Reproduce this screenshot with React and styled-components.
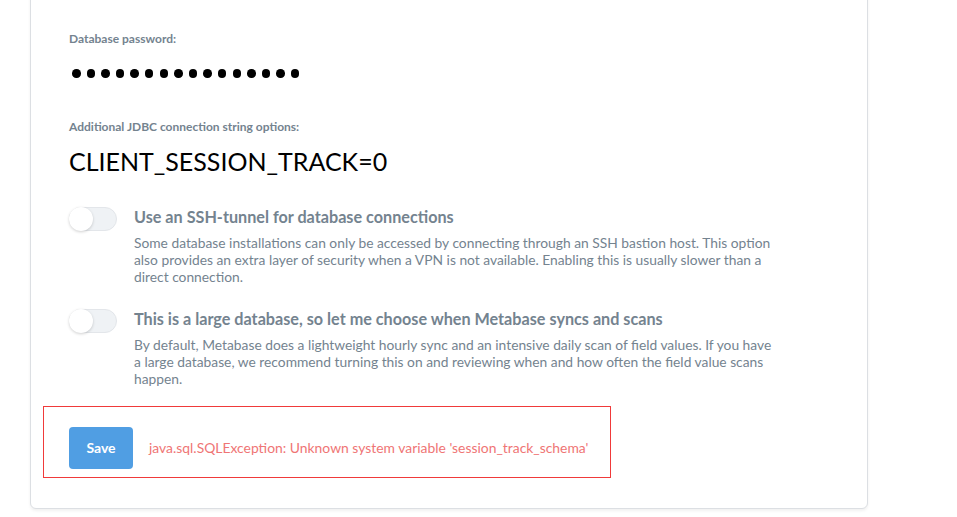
import React from 'react'
import styled, {createGlobalStyle} from 'styled-components'

const GlobalStyle = createGlobalStyle`
body {
  margin: 0;
  background: #ffffff;
  font-family: Lato, "Open Sans", sans-serif;
  overflow: hidden;
}
`

const Page = styled('div')`
width: 957px;
height: 517px;
overflow: hidden;
`

const Card = styled('div')`
margin: -10px 0 0 30px;
width: 798px;
padding: 40px 0 30px 38px;
background: #fff;
border: 1px solid #dcdfe3;
border-radius: 6px;
box-shadow: 0 2px 3px rgba(0, 0, 0, 0.06);
`

const Label = styled('div')`
font-size: 12px;
line-height: 16px;
font-weight: 700;
color: #74838f;
`

const DotRow = styled('div')`
display: flex;
gap: 6.1px;
margin: 22px 0 41px 3px;
`

const Dot = styled('span')`
width: 8.5px;
height: 8.5px;
border-radius: 50%;
background: #000;
`

const Value = styled('div')`
margin-top: 11px;
font-size: 25px;
line-height: 30px;
color: #000;
`

const ToggleRow = styled('div')`
display: flex;
gap: 17px;
margin-top: ${p => p.top}px;
`

const Toggle = styled('div')`
flex: none;
position: relative;
width: 46px;
height: 22px;
border: 1px solid #e3e6ea;
border-radius: 12px;
background: #eff2f5;
`

const Knob = styled('span')`
position: absolute;
left: -1px;
top: -1px;
width: 24px;
height: 24px;
border-radius: 50%;
background: #fff;
box-shadow: 0 1px 3px rgba(0, 0, 0, 0.18);
`

const OptionText = styled('div')`
max-width: 641px;
`

const OptionTitle = styled('div')`
font-size: 16.2px;
line-height: 20px;
font-weight: 700;
color: #74838f;
`

const OptionDesc = styled('div')`
margin-top: 7.5px;
font-size: 13.8px;
line-height: 17px;
color: #74838f;
`

const Highlight = styled('div')`
display: flex;
align-items: center;
gap: 16px;
margin: 18.5px 0 0 -26px;
width: 541px;
padding: 20px 0 8px 25px;
border: 1px solid #f03a3a;
`

const SaveButton = styled('button')`
width: 64px;
height: 42px;
border: none;
border-radius: 4px;
background: #509ee3;
color: #fff;
font-family: Lato, sans-serif;
font-weight: 700;
font-size: 14px;
`

const ErrorText = styled('span')`
font-size: 13.9px;
color: #ef7575;
`

const Option = ({top, title, children}) => (
  <ToggleRow top={top}>
    <Toggle><Knob /></Toggle>
    <OptionText>
      <OptionTitle>{title}</OptionTitle>
      <OptionDesc>{children}</OptionDesc>
    </OptionText>
  </ToggleRow>
)

export default function App() {
  return (
    <Page>
      <GlobalStyle />
      <Card>
        <Label>Database password:</Label>
        <DotRow>
          {Array.from({length: 16}).map((_, i) => <Dot key={i} />)}
        </DotRow>
        <Label>Additional JDBC connection string options:</Label>
        <Value>CLIENT_SESSION_TRACK=0</Value>
        <Option top={31} title="Use an SSH-tunnel for database connections">
          Some database installations can only be accessed by connecting through an SSH bastion host. This option also provides an extra layer of security when a VPN is not available. Enabling this is usually slower than a direct connection.
        </Option>
        <Option top={23.5} title="This is a large database, so let me choose when Metabase syncs and scans">
          By default, Metabase does a lightweight hourly sync and an intensive daily scan of field values. If you have a large database, we recommend turning this on and reviewing when and how often the field value scans happen.
        </Option>
        <Highlight>
          <SaveButton>Save</SaveButton>
          <ErrorText>java.sql.SQLException: Unknown system variable 'session_track_schema'</ErrorText>
        </Highlight>
      </Card>
    </Page>
  )
}
